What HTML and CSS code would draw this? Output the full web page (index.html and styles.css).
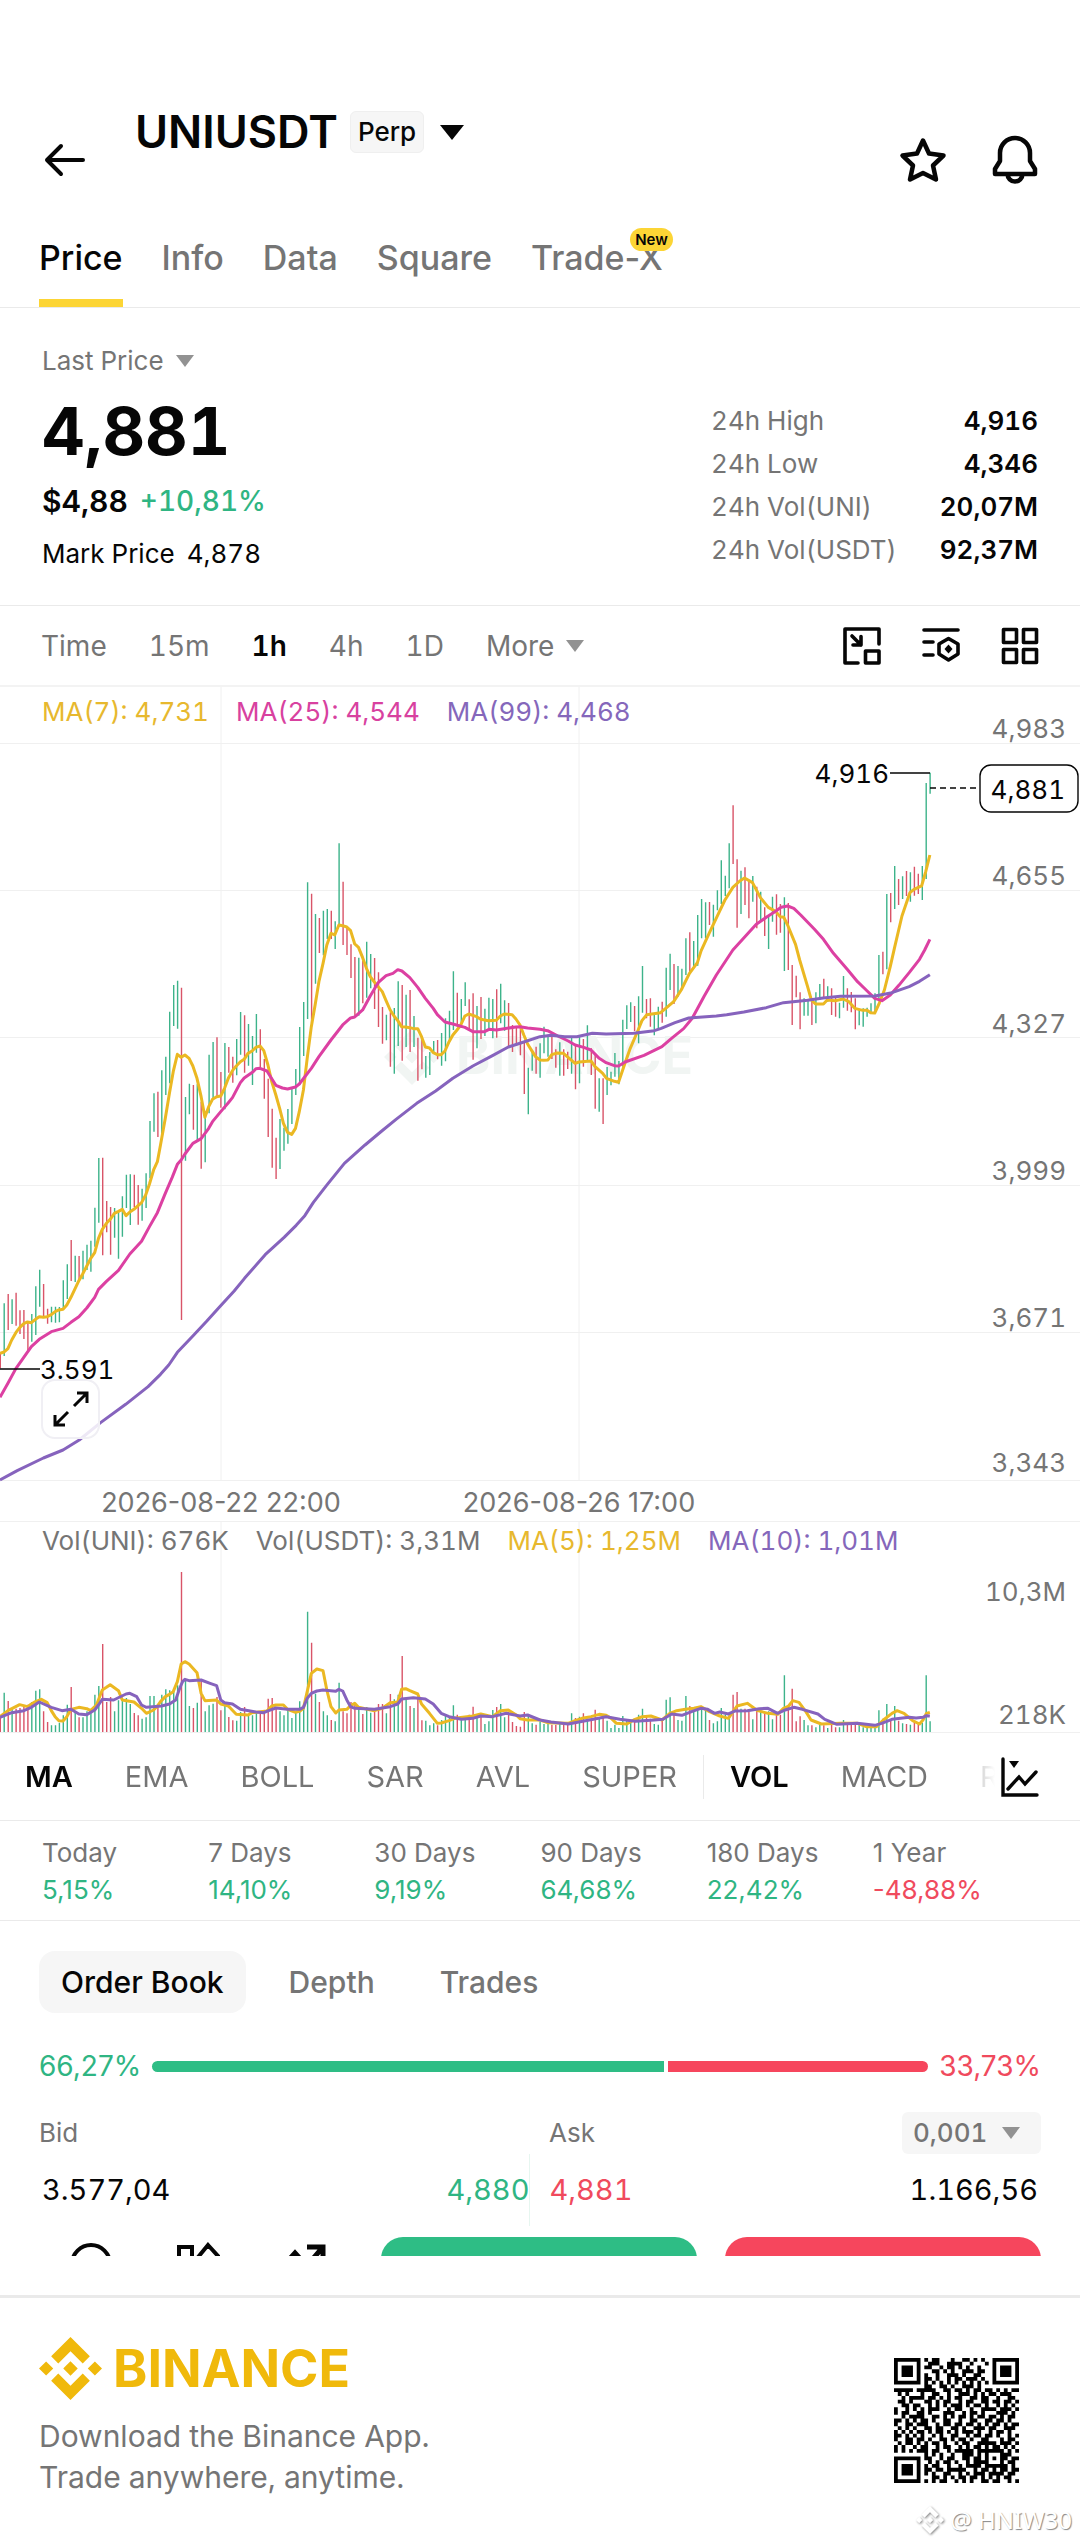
FILE: index.html
```html
<!DOCTYPE html>
<html lang="en">
<head>
<meta charset="utf-8">
<meta name="viewport" content="width=device-width, initial-scale=1">
<title>UNIUSDT Perp</title>
<link rel="stylesheet" href="styles.css">
</head>
<body>
<svg class="defs" aria-hidden="true">
  <symbol id="binance-mark" viewBox="0 0 126.61 126.61"><path d="M38.73 53.2 63.31 28.62 87.9 53.21 102.2 38.91 63.31 0 24.43 38.9ZM0 63.31 14.3 49 28.6 63.31 14.3 77.61ZM38.73 73.41 63.31 98 87.9 73.4 102.21 87.7 63.31 126.61 24.42 87.72ZM98 63.31 112.3 49.01 126.61 63.3 112.31 77.61ZM77.83 63.3 63.31 48.78 52.57 59.51 48.79 63.31 63.31 77.82Z"/></symbol>
</svg>

<header class="topbar">
  <button class="icon-btn" aria-label="Back"><svg width="42" height="36" viewBox="0 0 42 36" fill="none" stroke="currentColor" stroke-width="4" stroke-linecap="round" stroke-linejoin="round"><path d="M3 18H39M17 4 3 18l14 14"/></svg></button>
  <div class="pair">
    <h1>UNIUSDT</h1>
    <span class="chip">Perp</span>
    <button class="icon-btn" aria-label="Choose pair"><span class="caret caret-dark"></span></button>
  </div>
  <div class="actions">
    <button class="icon-btn" aria-label="Favorite"><svg width="48" height="48" viewBox="0 0 48 48" fill="none" stroke="currentColor" stroke-width="4.500" stroke-linejoin="round"><path d="M24 4.500 30 17.500 44.500 19.500 34 29.500 37 43.500 24 37 11 43.500 14 29.500 3.500 19.500 18 17.500Z"/></svg></button>
    <button class="icon-btn" aria-label="Price alert"><svg width="48" height="50" viewBox="0 0 48 50" fill="none" stroke="currentColor" stroke-width="4.500" stroke-linejoin="round"><path d="M9 26V18a15 15 0 0 1 30 0v8l5 8v5H4v-5ZM16.500 39a7.500 7.500 0 0 0 15 0"/></svg></button>
  </div>
</header>

<nav class="tabs">
  <a href="#price" class="active">Price</a>
  <a href="#info">Info</a>
  <a href="#data">Data</a>
  <a href="#square">Square</a>
  <a href="#trade-x">Trade-X<span class="new">New</span></a>
</nav>

<main>
<section class="quote" id="price">
  <div class="quote-main">
    <button class="last">Last Price <span class="caret"></span></button>
    <p class="big">4,881</p>
    <p class="change"><strong>$4,88</strong> <span class="up">+10,81%</span></p>
    <p class="mark"><span>Mark Price</span> <span>4,878</span></p>
  </div>
  <dl class="stats">
    <dt>24h High</dt><dd>4,916</dd>
    <dt>24h Low</dt><dd>4,346</dd>
    <dt>24h Vol(UNI)</dt><dd>20,07M</dd>
    <dt>24h Vol(USDT)</dt><dd>92,37M</dd>
  </dl>
</section>

<div class="toolbar">
  <div class="intervals">
    <button>Time</button><button>15m</button><button class="active">1h</button><button>4h</button><button>1D</button><button class="more">More <span class="caret"></span></button>
  </div>
  <div class="tools">
    <button class="icon-btn" aria-label="Floating window"><svg width="38" height="38" viewBox="0 0 38 38" fill="none" stroke="currentColor" stroke-width="3.600" stroke-linecap="round" stroke-linejoin="round"><path d="M36 17V2H2v34h13M9 9l9 9M18 9.500V18H10M22.500 24H36v12H22.500Z"/></svg></button>
    <button class="icon-btn" aria-label="Chart settings"><svg width="38" height="38" viewBox="0 0 38 38" fill="none" stroke="currentColor" stroke-width="3.600" stroke-linecap="round" stroke-linejoin="round"><path d="M2 3H36M2 15H11M2 28H11M26.500 11.500 36 17v10l-9.500 6-9.500-6V17Z"/><path fill="currentColor" stroke="none" d="m26.500 17.500 4 4.500-4 4.500-4-4.500Z"/></svg></button>
    <button class="icon-btn" aria-label="Layout"><svg width="38" height="38" viewBox="0 0 38 38" fill="none" stroke="currentColor" stroke-width="3.600" stroke-linejoin="round"><path d="M2.500 2.500h13v13h-13ZM22.500 2.500h13v13h-13ZM2.500 22.500h13v13h-13ZM22.500 22.500h13v13h-13Z"/></svg></button>
  </div>
</div>

<section class="chart">
  <p class="legend"><span class="c-yellow">MA(7): 4,731</span><span class="c-pink">MA(25): 4,544</span><span class="c-violet">MA(99): 4,468</span></p>
  <svg viewBox="0 0 1080 1046" role="img" aria-label="UNIUSDT hourly candles with volume">
    <path class="grid" d="M0 56.500H1080M0 203.500H1080M0 350.500H1080M0 498.500H1080M0 645.500H1080M0 793.500H1080M0 834.500H1080M0 1045.500H1080M221 0V793M579 0V793M221 834V1045M579 834V1045"/>
    <g class="watermark">
      <svg x="384" y="342" width="56" height="56"><use href="#binance-mark"/></svg>
      <text x="456" y="387">BINANCE</text>
    </g>
    <g transform="translate(0 -7)">
      <path id="up-candles" class="up-line"/>
      <path id="down-candles" class="down-line"/>
      <g transform="scale(.34439 .33333)" class="averages">
        <polyline class="s-yellow" points="0,2020 12,2016 23,2006 34,1980 46,1958 57,1943 69,1931 80,1926 91,1928 103,1918 114,1910 126,1912 137,1910 149,1904 160,1895 171,1890 183,1888 194,1875 206,1852 217,1828 229,1802 240,1782 252,1758 263,1736 275,1718 286,1675 297,1648 309,1630 320,1618 332,1600 344,1594 355,1588 366,1607 377,1596 389,1588 400,1578 411,1568 423,1545 434,1512 446,1470 457,1445 466,1395 480,1315 492,1240 503,1175 515,1123 526,1132 537,1125 549,1135 560,1158 572,1195 584,1250 595,1312 606,1280 617,1258 629,1250 641,1248 652,1225 663,1195 675,1172 686,1158 698,1145 709,1138 720,1120 732,1113 743,1102 755,1098 766,1112 778,1155 789,1205 801,1245 812,1285 823,1330 835,1357 847,1363 858,1345 869,1295 881,1230 892,1135 904,1040 915,975 926,905 938,850 949,795 961,760 972,765 984,735 995,737 1007,741 1018,752 1030,792 1041,802 1053,833 1064,865 1075,890 1087,906 1098,920 1110,935 1121,962 1133,990 1144,1008 1155,1022 1166,1040 1178,1041 1190,1043 1201,1046 1213,1046 1224,1070 1235,1101 1247,1104 1258,1118 1270,1124 1281,1124 1292,1113 1304,1085 1315,1065 1327,1050 1338,1035 1350,1008 1361,1002 1384,1010 1396,1018 1418,1022 1441,1021 1453,1008 1464,1002 1487,1004 1498,1017 1510,1035 1521,1065 1532,1092 1544,1112 1555,1130 1568,1140 1579,1141 1591,1140 1602,1124 1618,1119 1636,1120 1647,1130 1670,1150 1681,1146 1716,1143 1728,1160 1750,1180 1761,1195 1784,1204 1796,1207 1813,1155 1830,1105 1853,1050 1864,1022 1878,1004 1918,998 1933,985 1956,965 1978,930 2002,880 2025,848 2036,812 2059,760 2082,710 2105,660 2128,622 2148,603 2162,594 2185,608 2208,653 2231,682 2253,695 2265,710 2276,712 2287,735 2310,793 2322,840 2345,920 2356,960 2368,972 2391,972 2402,960 2425,962 2448,957 2465,965 2482,985 2505,991 2518,991 2528,998 2540,999 2553,970 2568,930 2585,860 2597,805 2619,708 2642,638 2654,628 2676,618 2688,575 2700,525"/>
        <polyline class="s-pink" points="0,2152 23,2110 46,2066 69,2032 91,2000 114,1978 149,1955 183,1945 206,1927 229,1910 252,1884 275,1852 286,1828 309,1804 344,1771 377,1722 411,1684 434,1640 457,1598 480,1540 500,1492 515,1453 526,1440 537,1422 560,1390 584,1376 606,1345 617,1325 641,1295 663,1268 675,1253 698,1208 709,1194 735,1175 743,1166 755,1165 775,1173 801,1216 820,1224 835,1227 858,1221 869,1212 904,1165 926,1130 961,1080 995,1035 1018,1014 1030,1011 1053,990 1075,948 1098,908 1121,887 1141,880 1155,869 1167,873 1190,893 1213,922 1235,955 1258,985 1270,1004 1292,1026 1315,1032 1350,1042 1373,1055 1407,1055 1420,1048 1441,1050 1464,1046 1498,1041 1510,1040 1532,1044 1568,1048 1590,1052 1620,1068 1650,1083 1670,1095 1695,1102 1716,1110 1740,1135 1760,1148 1784,1157 1796,1158 1815,1146 1870,1126 1922,1100 1950,1075 1985,1046 2010,1015 2045,948 2080,885 2128,810 2165,768 2196,733 2225,712 2250,695 2268,682 2287,678 2305,685 2325,705 2365,748 2391,778 2420,820 2460,868 2490,905 2515,930 2540,955 2561,962 2585,945 2610,916 2640,878 2670,838 2685,810 2700,778"/>
        <polyline class="s-violet" points="0,2400 50,2372 126,2334 183,2310 230,2280 292,2228 365,2173 430,2120 466,2083 490,2055 515,2017 560,1968 600,1924 640,1878 680,1833 710,1795 770,1724 825,1672 860,1636 885,1607 910,1567 950,1514 1000,1450 1060,1395 1105,1356 1150,1318 1210,1270 1265,1233 1315,1195 1373,1158 1430,1127 1476,1101 1521,1086 1568,1070 1600,1066 1640,1070 1675,1070 1720,1060 1760,1062 1840,1060 1900,1052 1920,1045 1960,1028 2000,1014 2030,1012 2080,1008 2110,1004 2160,996 2225,983 2275,968 2345,961 2390,954 2440,949 2540,948 2560,944 2590,938 2640,920 2670,904 2700,884"/>
      </g>
      <path id="up-volume" class="up-line"/>
      <path id="down-volume" class="down-line"/>
      <g transform="translate(0 820) scale(.34439 .33333)" class="averages">
        <polyline class="s-yellow" points="0,650 23,632 57,614 80,620 91,612 103,605 120,598 137,608 149,632 160,650 171,662 183,663 194,650 206,628 229,622 252,626 263,632 280,615 297,570 309,562 320,554 344,572 355,600 389,606 411,625 425,640 446,630 457,618 466,605 480,590 492,583 503,575 515,545 526,492 537,485 549,492 572,518 584,580 595,602 629,600 641,612 663,618 686,643 720,645 732,638 775,633 789,618 801,615 823,615 835,628 858,637 870,634 881,625 892,575 904,520 920,507 938,512 949,570 961,620 975,639 984,630 1007,628 1018,617 1030,610 1041,622 1087,632 1110,625 1133,608 1155,606 1166,568 1178,566 1190,572 1213,582 1224,612 1247,640 1270,670 1281,669 1304,662 1320,655 1373,648 1396,642 1430,650 1453,632 1476,630 1498,644 1510,656 1532,660 1568,660 1590,668 1650,670 1670,662 1690,655 1716,650 1740,643 1760,646 1775,655 1790,670 1820,672 1840,660 1865,650 1890,648 1922,660 1945,640 1965,632 1990,628 2015,625 2035,620 2060,635 2090,648 2115,655 2125,640 2140,618 2170,610 2200,632 2230,640 2258,643 2275,625 2290,618 2302,602 2320,607 2340,635 2355,660 2385,672 2440,670 2490,670 2515,680 2545,680 2565,660 2590,640 2605,632 2625,640 2650,662 2670,672 2680,660 2690,640 2700,637"/>
        <polyline class="s-violet" points="0,652 34,638 69,632 91,622 114,606 149,622 180,632 206,628 229,642 252,644 275,630 286,615 297,598 330,600 366,582 377,580 397,590 411,615 425,622 469,618 492,612 510,600 520,570 530,545 537,538 549,542 584,540 610,550 629,557 641,600 652,608 675,612 698,628 743,636 766,638 780,632 801,624 835,628 870,628 881,622 892,595 904,580 920,573 938,570 975,574 984,568 995,573 1007,600 1018,620 1030,625 1087,628 1133,620 1155,612 1166,597 1200,593 1235,597 1258,612 1281,640 1304,650 1340,658 1373,655 1396,648 1430,650 1470,640 1510,648 1532,645 1568,660 1600,666 1650,672 1700,662 1760,650 1800,658 1845,664 1900,660 1925,658 1950,642 1980,646 2010,634 2035,625 2055,628 2075,640 2090,636 2115,642 2135,633 2170,632 2205,626 2230,625 2258,640 2280,630 2305,622 2330,628 2375,642 2395,658 2430,673 2490,670 2540,676 2560,670 2590,658 2640,652 2660,654 2680,652 2690,647 2700,648"/>
      </g>
    </g>
    <g class="axis" text-anchor="end">
      <text x="1066" y="51">4,983</text><text x="1066" y="198">4,655</text><text x="1066" y="346">4,327</text>
      <text x="1066" y="493">3,999</text><text x="1066" y="640">3,671</text><text x="1066" y="785">3,343</text>
      <text x="1066" y="914">10,3M</text><text x="1066" y="1037">218K</text>
    </g>
    <g class="axis dates" text-anchor="middle"><text x="221" y="825">2026-08-22 22:00</text><text x="579" y="825">2026-08-26 17:00</text></g>
    <path class="pointer" d="M890 86H930M0 682H40"/>
    <path class="pointer" stroke-dasharray="6 4" d="M930 101H979"/>
    <text class="note" x="889" y="96" text-anchor="end">4,916</text>
    <text class="note" x="40" y="692">3.591</text>
    <rect class="price-tag" x="980" y="78" width="98" height="47" rx="11"/>
    <text class="note" x="1065" y="112" text-anchor="end">4,881</text>
  </svg>
  <button class="expand" aria-label="Full screen"><svg width="36" height="36" viewBox="0 0 36 36" fill="none" stroke="currentColor" stroke-width="3"><path d="M21 15 34 2M24 2H34V12M15 21 2 34M2 24V34H12"/></svg></button>
  <p class="legend legend-volume"><span>Vol(UNI): 676K</span><span>Vol(USDT): 3,31M</span><span class="c-yellow">MA(5): 1,25M</span><span class="c-violet">MA(10): 1,01M</span></p>
</section>

<div class="indicators">
  <div class="indicator-list">
    <button class="active">MA</button><button>EMA</button><button>BOLL</button><button>SAR</button><button>AVL</button><button>SUPER</button><button class="active split">VOL</button><button>MACD</button><button>RSI</button>
  </div>
  <button class="icon-btn" aria-label="Indicator settings"><svg width="38" height="40" viewBox="0 0 38 40" fill="none" stroke="currentColor" stroke-width="3.400" stroke-linecap="round"><path d="M2 2V38H36M7 32 18 20l6 7 11-12"/><path d="M8 4H18L13 11Z" fill="currentColor" stroke="none"/></svg></button>
</div>

<dl class="returns">
  <div><dt>Today</dt><dd class="up">5,15%</dd></div>
  <div><dt>7 Days</dt><dd class="up">14,10%</dd></div>
  <div><dt>30 Days</dt><dd class="up">9,19%</dd></div>
  <div><dt>90 Days</dt><dd class="up">64,68%</dd></div>
  <div><dt>180 Days</dt><dd class="up">22,42%</dd></div>
  <div><dt>1 Year</dt><dd class="down">-48,88%</dd></div>
</dl>

<section class="market">
  <div class="market-tabs"><button class="active">Order Book</button><button>Depth</button><button>Trades</button></div>
  <div class="ratio">
    <span class="up">66,27%</span>
    <div class="ratio-bar"><i class="bid" style="flex-grow:66.27"></i><i class="ask" style="flex-grow:33.73"></i></div>
    <span class="down">33,73%</span>
  </div>
  <table class="book">
    <colgroup><col class="col-size"><col class="col-bid"><col class="col-ask"><col></colgroup>
    <thead><tr><th colspan="2" scope="colgroup">Bid</th><th scope="col">Ask</th><th>
      <label class="step"><select aria-label="Price step"><option>0,001</option></select><span class="caret"></span></label></th></tr></thead>
    <tbody><tr><td>3.577,04</td><td class="up best">4,880</td><td class="down">4,881</td><td>1.166,56</td></tr></tbody>
  </table>
  <div class="trade-bar">
    <div class="shortcuts">
      <button class="icon-btn" aria-label="Assets"><svg width="44" height="44" viewBox="0 0 44 44" fill="none" stroke="currentColor" stroke-width="4"><circle cx="22" cy="22" r="19"/></svg></button>
      <button class="icon-btn" aria-label="Tools"><svg width="44" height="44" viewBox="0 0 44 44" fill="none" stroke="currentColor" stroke-width="4"><path d="M3 5H16V18H3ZM32 3 42 14 32 25 23 14ZM3 26H16V40H3ZM25 28H40V40H25Z"/></svg></button>
      <button class="icon-btn" aria-label="Margin"><svg width="44" height="44" viewBox="0 0 44 44" fill="none" stroke="currentColor" stroke-width="5"><path d="M2 22 12 11 22 22M24 5H40V20M40 5 22 26"/></svg></button>
    </div>
    <button class="buy" aria-label="Long"></button>
    <button class="sell" aria-label="Short"></button>
  </div>
</section>
</main>

<footer>
  <div>
    <div class="brand"><svg width="63" height="63"><use href="#binance-mark"/></svg><span>BINANCE</span></div>
    <p>Download the Binance App.<br>Trade anywhere, anytime.</p>
  </div>
  <svg class="qr" width="125" height="125" viewBox="0 0 33 33" role="img" aria-label="Download QR code"><path id="qr-modules"/></svg>
  <div class="author"><svg width="28" height="28"><use href="#binance-mark"/></svg>@ HNIW30</div>
</footer>
<script src="chart.js"></script>
</body>
</html>
```
FILE: styles.css
```css
* { box-sizing: border-box; }
body { margin: 0; position: relative; background: #fff; color: #060606; font-family: Inter, "Liberation Sans", sans-serif; font-size: 26px; font-variant-numeric: tabular-nums; line-height: 32px; }
h1, p, dl, dd { margin: 0; }
button, select { margin: 0; padding: 0; border: 0; background: none; color: inherit; font: inherit; font-variant-numeric: inherit; }
svg { display: block; }
.defs { position: absolute; width: 0; height: 0; }
.icon-btn { display: flex; align-items: center; color: #060606; }
.up { color: #2fb583; }
.down { color: #f04a5d; }
.caret { display: inline-block; border: 9px solid transparent; border-top: 12px solid #929292; border-bottom: 0; }
.caret-dark { border-width: 15px 12px 0; border-top-color: #060606; }

.topbar { display: flex; align-items: center; height: 100px; margin-top: 110px; padding: 0 41px 0 44px; }
.pair { display: flex; align-items: center; align-self: flex-start; gap: 12px; height: 44px; margin-left: 49px; }
h1 { font-size: 45px; font-weight: 600; line-height: 44px; }
.chip { padding: 4px 7px; border: 1px solid #efefef; border-radius: 6px; background: #f6f6f6; font-weight: 500; }
.pair .icon-btn { margin-left: 4px; }
.actions { display: flex; align-items: center; gap: 44px; margin-left: auto; }

.tabs { display: flex; gap: 39px; padding: 28px 39px 0; border-bottom: 1px solid #eaeaea; font-size: 34px; font-weight: 500; font-variant-numeric: normal; line-height: 40px; }
.tabs a { position: relative; padding-bottom: 29px; color: #757575; text-decoration: none; }
.tabs .active { padding-bottom: 21px; border-bottom: 8px solid #fcd535; color: #060606; }
.new { position: absolute; top: -10px; right: -10px; padding: 0 5px; border-radius: 12px; background: #fcd535; color: #060606; font-size: 15px; font-weight: 600; line-height: 23px; }

.quote { display: flex; justify-content: space-between; align-items: flex-end; padding: 37px 42px 34px; border-bottom: 1px solid #eaeaea; }
.last { display: flex; align-items: center; gap: 12px; color: #757575; }
.big { margin-top: 14px; font-size: 66px; font-weight: 700; line-height: 80px; }
.change { display: flex; gap: 12px; margin-top: 12px; font-size: 28px; font-weight: 500; line-height: 36px; }
.change strong { font-size: 30px; font-weight: 600; }
.mark { display: flex; gap: 12px; margin-top: 18px; line-height: 34px; }
.stats { display: grid; grid-template-columns: auto auto; column-gap: 43px; line-height: 43px; }
.stats dt { color: #757575; }
.stats dd { text-align: right; font-weight: 600; }

.toolbar { display: flex; justify-content: space-between; align-items: center; height: 81px; padding: 0 41px; border-bottom: 2px solid #f3f3f3; }
.intervals { display: flex; gap: 42px; color: #757575; font-size: 28px; }
.intervals .active { color: #060606; font-weight: 600; }
.more { display: flex; align-items: center; gap: 12px; }
.tools { display: flex; gap: 41px; }

.chart { position: relative; }
.chart > svg { width: 100%; height: auto; }
.legend { position: absolute; top: 9px; left: 42px; display: flex; gap: 27px; color: #757575; }
.legend-volume { top: 838px; }
.c-yellow { color: #e7b82e; }
.c-pink { color: #d8419f; }
.c-violet { color: #8567bb; }
.grid { fill: none; stroke: #f0f0f0; stroke-width: 1; }
.watermark { fill: #f1f5f3; font-size: 52px; font-weight: 700; }
.up-line, .down-line { fill: none; stroke-width: 1.4; stroke: #3db38a; }
.down-line { stroke: #d95468; }
.averages polyline { fill: none; stroke-width: 3; stroke-linejoin: round; vector-effect: non-scaling-stroke; }
.averages .s-yellow { stroke: #ebb822; }
.averages .s-pink { stroke: #dc40a2; }
.averages .s-violet { stroke: #8663bd; }
.axis { fill: #757575; }
.dates { font-size: 27px; font-variant-numeric: normal; }
.note { fill: #060606; }
.pointer { fill: none; stroke: #060606; stroke-width: 1.4; }
.price-tag { fill: #fff; stroke: #060606; stroke-width: 1.4; }
.expand { position: absolute; left: 41px; top: 692px; display: grid; place-items: center; width: 59px; height: 60px; border: 2px solid #f0eff4; border-radius: 14px; background: rgba(255, 255, 255, 0.85); color: #060606; }

.indicators { display: flex; align-items: center; justify-content: space-between; height: 88px; padding: 0 41px 0 25px; border-bottom: 1px solid #eaeaea; }
.indicator-list { display: flex; gap: 52px; flex: 1; width: 0; margin-right: 6px; overflow: hidden; color: #757575; font-size: 29px; line-height: 44px; -webkit-mask-image: linear-gradient(to left, transparent, #000 48px); mask-image: linear-gradient(to left, transparent, #000 48px); }
.indicator-list .active { color: #060606; font-weight: 600; }
.indicator-list .split { margin-left: -26px; padding-left: 26px; border-left: 1px solid #eaeaea; }

.returns { display: grid; grid-template-columns: repeat(6, 1fr); padding: 13px 41px 12px 42px; border-bottom: 1px solid #eaeaea; font-variant-numeric: normal; line-height: 37px; }
.returns dt { color: #757575; }

.market { padding: 30px 39px 39px; }
.market-tabs { display: flex; gap: 21px; color: #757575; font-size: 30px; font-weight: 500; line-height: 62px; }
.market-tabs button { padding: 0 22px; border-radius: 16px; }
.market-tabs .active { background: #f6f6f6; color: #060606; }
.ratio { display: flex; align-items: center; gap: 11px; margin-top: 33px; font-size: 28px; font-variant-numeric: normal; line-height: 40px; }
.ratio-bar { display: flex; flex: 1; gap: 4px; height: 11px; }
.bid { border-radius: 6px 0 0 6px; background: #2ebd85; }
.ask { border-radius: 0 6px 6px 0; background: #f6465d; }
.book { width: 100%; margin-top: 26px; border-collapse: collapse; table-layout: fixed; text-align: left; }
.col-size, .col-ask { width: 25%; }
.col-bid { width: 24%; }
.book th { height: 42px; padding: 0; color: #757575; font-weight: 400; }
.book th:nth-child(2), .book td:nth-child(3) { padding-left: 19px; }
.book th:last-child { text-align: right; }
.book td { height: 72px; padding: 0 3px; font-size: 29px; }
.book td:last-child { text-align: right; }
.book .best { padding: 0; text-align: right; border-right: 1px solid #e6f6f0; }
.step { display: inline-flex; align-items: center; gap: 14px; padding: 0 21px 0 11px; border-radius: 6px; background: #f6f6f6; font-weight: 500; line-height: 42px; vertical-align: top; }
.step select { appearance: none; height: 42px; }
.trade-bar { display: flex; gap: 28px; height: 19px; margin-top: 11px; overflow: hidden; }
.shortcuts { display: flex; align-items: flex-start; gap: 63px; width: 314px; padding: 5px 0 0 30px; }
.buy, .sell { flex: 1; height: 84px; border-radius: 22px; background: #2ebd85; }
.sell { background: #f6465d; }

footer { display: flex; justify-content: space-between; padding: 39px 61px 46px 39px; border-top: 3px solid #eaeaea; color: #757575; font-size: 30px; line-height: 41px; }
.brand { display: flex; align-items: center; gap: 11px; height: 63px; margin-bottom: 16px; color: #f0b90b; fill: currentColor; font-size: 52px; font-weight: 700; }
.qr { margin-top: 21px; }
.author { position: absolute; right: 8px; bottom: 8px; display: flex; align-items: center; gap: 6px; color: #fff; fill: currentColor; font-family: "Noto Sans", sans-serif; font-size: 24px; line-height: 32px; text-shadow: 1px 1px 1px #888; }
.author svg { filter: drop-shadow(1px 1px 1px #888); }
```
FILE: chart.js
```js
// Hourly candles as "direction high low", in thirds of a unit below the top edge.
const candles = `r2020-2065 g1870-2028 r1842-1950 g1858-1932 r1838-1937 r1891-1962 r1890-1977 r1925-2017 g1902-1985 g1819-1965
g1769-1880 r1812-1910 r1886-1931 g1880-1927 g1880-1928 g1881-1927 g1801-1890 g1753-1857 r1680-1803 g1727-1806
r1728-1800 g1712-1798 g1694-1770 g1682-1775 g1583-1700 g1434-1628 r1433-1726 r1563-1657 r1581-1724 g1584-1673
g1596-1736 g1549-1670 g1484-1584 g1483-1635 r1484-1582 r1515-1634 g1526-1622 g1480-1584 g1323-1495 g1240-1355
r1235-1371 g1171-1380 g1130-1245 g995-1210 g915-1038 g902-1046 r923-1920 g1251-1442 g1211-1303 r1215-1349
g1213-1385 r1265-1466 g1300-1447 g1124-1300 g1086-1260 r1072-1250 r1176-1283 g1089-1288 r1101-1178 r1130-1208
g1077-1186 g996-1124 r1006-1178 g1032-1157 g1068-1215 g1002-1118 r1048-1165 r1137-1256 r1196-1371 r1286-1463
r1373-1497 g1317-1467 g1343-1412 g1287-1391 g1225-1332 g1167-1245 g1041-1215 g966-1128 g607-1017 r641-1030
g702-911 r714-819 g692-826 g687-777 r692-777 g724-807 g490-740 r605-795 r740-825 r793-894
r831-1007 g833-1007 r843-970 g785-953 g822-925 r834-987 r877-1041 r981-1091 g1004-1081 r997-1160
g984-1181 g904-1098 r915-1142 g944-1101 r930-1116 g1008-1101 r1073-1202 r1073-1168 g1128-1193 g1116-1185
g1083-1116 r1080-1138 g1059-1157 g1015-1144 g992-1079 g874-1050 r938-1040 g957-1044 g907-978 r958-1052
r940-1139 g978-1105 r951-1077 g986-1068 g953-1052 g957-1075 r928-1073 g911-1030 g961-1052 r969-1100
r1035-1116 r1040-1098 r1043-1126 r1088-1242 g1163-1303 g1110-1172 r1100-1181 g1090-1193 g1040-1120 g1064-1130
r1060-1137 r1108-1163 g1087-1187 r1108-1187 r1115-1167 g1068-1181 r1095-1228 g1068-1210 r1077-1160 g1036-1140
r1105-1185 r1125-1286 g1195-1295 r1195-1332 g1161-1245 g1175-1216 g1119-1190 g1143-1213 g1019-1160 g976-1047
g967-1026 r978-1053 g949-1090 g858-998 r957-1015 r955-1040 g1000-1066 g980-1045 r965-1028 g863-1010
g821-930 r852-972 g858-950 g866-925 g775-885 r757-875 g783-860 g705-857 g657-775 g667-775
r666-735 g674-770 g631-691 g541-672 g587-648 g490-625 r376-552 r538-743 g572-702 r562-675
r600-715 g588-665 r620-745 g635-720 r682-768 g710-807 g650-725 r643-764 r672-758 g652-873
r669-870 r855-1035 r887-952 r937-1048 g955-1007 g960-1007 r965-1035 g937-1030 g912-960 r896-955
g919-965 r925-1005 r950-1010 g968-1015 g888-983 r925-992 r936-997 r955-1048 g988-1036 g985-1040
g983-1010 g970-998 g940-1000 g825-960 r815-883 g642-868 r639-727 g558-687 r597-675 g589-657
r573-648 g577-665 r560-647 r581-642 g558-660 g309-597 g278-341`.split(/\s+/);

const volumes = [45,118,93,70,70,72,80,82,90,124,128,62,30,20,20,28,50,82,135,60,44,44,62,68,112,138,264,90,105,62,95,98,102,84,57,50,40,44,108,108,80,112,128,125,132,140,480,155,78,72,88,155,62,80,85,105,65,78,45,35,34,60,75,50,50,62,60,60,100,102,75,62,50,68,42,60,92,85,361,268,115,90,62,50,36,32,148,62,56,90,82,70,54,75,58,70,84,84,56,114,98,112,228,100,78,72,105,35,34,20,26,20,36,54,42,80,52,40,44,52,76,52,56,24,32,66,75,84,44,60,30,18,16,60,52,26,22,30,24,24,22,22,26,22,30,56,42,46,56,40,38,67,40,50,34,12,22,12,48,36,30,35,52,70,45,40,24,22,34,97,104,60,36,34,108,78,60,72,72,72,36,26,32,72,52,50,112,120,70,70,60,38,64,60,58,62,38,56,52,170,80,130,32,47,36,20,20,14,22,20,12,30,14,14,36,26,24,30,24,14,12,12,18,65,40,84,38,78,34,26,24,22,36,30,28,170,32];

const step = 3.94;
const volumeBase = 1052;
const paths = { g: ["", ""], r: ["", ""] };
candles.forEach((candle, i) => {
  const x = (i * step + 0.3).toFixed(1);
  const [high, low] = candle.slice(1).split("-").map(v => (v / 3).toFixed(1));
  paths[candle[0]][0] += `M${x} ${high}V${low}`;
  paths[candle[0]][1] += `M${x} ${volumeBase}v${(-volumes[i] / 3).toFixed(1)}`;
});
document.getElementById("up-candles").setAttribute("d", paths.g[0]);
document.getElementById("down-candles").setAttribute("d", paths.r[0]);
document.getElementById("up-volume").setAttribute("d", paths.g[1]);
document.getElementById("down-volume").setAttribute("d", paths.r[1]);

// Download link code, one row of modules per line.
const modules = [
  "#######.#.##...#..##.#.#..#######",
  "#.....#..###..####..#...#.#.....#",
  "#.###.#.##..#.##.#.#..#...#.###.#",
  "#.###.#...##.#.#..###.##..#.###.#",
  "#.###.#.#..#..###.#..##...#.###.#",
  "#.....#.##.#..#.##.###.#..#.....#",
  "#######.#.#.#.#.#.#.#.#.#.#######",
  "........##..##.#..###.#..........",
  "#####.#####..##.##.#.##.##.#.#.##",
  ".#.#...#..##..#..###.#.#.##.###..",
  "..#.####.##.#.#.##..##.##..#..##.",
  ".##.#...##.#.##..#.##..##.##.##.#",
  "..##.##..#.#.#.###.#.##.#..#.#.#.",
  "#..#.#.#.###..#.##..#..####.###.#",
  "#.##..##.#...###..#.##.#...###.#.",
  "..#.####..##.#.#.##.#.##.##.#.##.",
  "##.#.#.##.#..##..#..##..##.##.#..",
  "#..##.###..#.##.##.##.#.#.##.#.##",
  ".#.#.#..##.##..##.#..###.##..###.",
  "#.#.#.##.#.##.#.#.###.#..#.##.#..",
  "##.#.#.#..#.#..##..#.##.##.#..#.#",
  "#..##.##.#..##.#.##.#..##...#.##.",
  ".#.##.#.#.##.#..#.##..#####.###.#",
  "#.#..#.##..#.##..#.#.##.#.##.#.#.",
  "#.#.#.###.##..#.#####.#######.#.#",
  "........#.#.#..#..###.#.#...###..",
  "#######.##..#.##..##.##.#.#.##.##",
  "#.....#..#.#.##.#..#.####...#.##.",
  "#.###.#.#.##..#..#.####.######.#.",
  "#.###.#.##.##.#####..#.##.#.##.##",
  "#.###.#.#.#..##..#.#.###.####.##.",
  "#.....#...##.#.#.##.##.#.#.#.##..",
  "#######.#.#.##..#.#.#..##.##..#.#"
];
let qr = "";
modules.forEach((row, y) => {
  for (const run of row.matchAll(/#+/g)) qr += `M${run.index} ${y}h${run[0].length}v1h-${run[0].length}z`;
});
document.getElementById("qr-modules").setAttribute("d", qr);
```
